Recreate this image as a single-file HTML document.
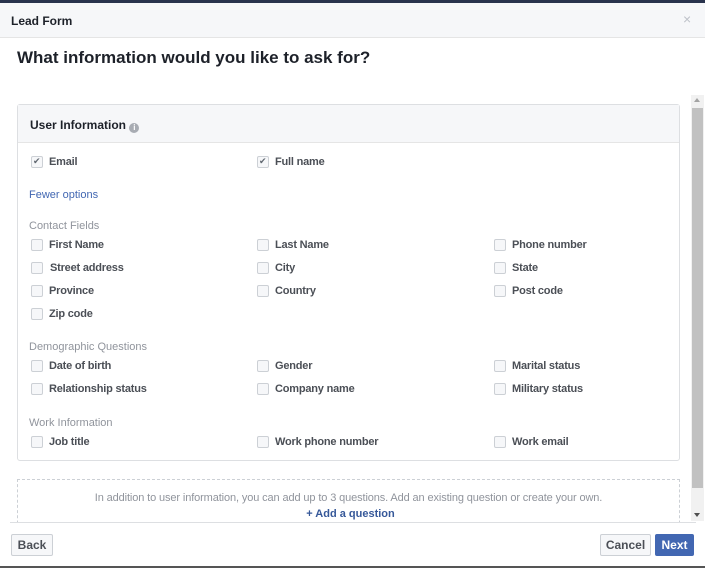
<!DOCTYPE html>
<html><head><style>
*{margin:0;padding:0;box-sizing:border-box}
body{width:705px;height:568px;position:relative;overflow:hidden;background:#fff;font-family:"Liberation Sans",Arial,sans-serif;}
.a{position:absolute}
.cb{position:absolute;width:12px;height:12px;border:1px solid #ccd0d5;border-radius:2px;background:#f6f7f9}
.lb{position:absolute;font-size:11px;font-weight:bold;color:#4b4f56;line-height:13px;letter-spacing:-0.2px;margin-top:1px}
.sec{position:absolute;font-size:11px;color:#90949c;line-height:13px;margin-top:1px}
.ck{position:absolute;left:1px;top:-1px;font-size:9px;color:#606770}
</style></head><body>
<div class="a" style="left:0;top:0;width:705px;height:3px;background:#29334d"></div>
<div class="a" style="left:0;top:3px;width:705px;height:35px;background:#f6f7f9;border-bottom:1px solid #e5e5e5"></div>
<div class="a" style="left:11px;top:14px;font-size:12px;font-weight:bold;color:#1d2129">Lead Form</div>
<div class="a" style="left:683px;top:11px;font-size:14px;color:#bec2c9">×</div>
<div class="a" style="left:17px;top:48px;font-size:17px;font-weight:bold;color:#1d2129">What information would you like to ask for?</div>

<div class="a" style="left:17px;top:104px;width:663px;height:357px;border:1px solid #dddfe2;border-radius:3px"></div>
<div class="a" style="left:18px;top:105px;width:661px;height:38px;background:#f6f7f9;border-bottom:1px solid #e5e5e5"></div>
<div class="a" style="left:30px;top:118px;font-size:12px;font-weight:bold;color:#1d2129">User Information <span style="display:inline-block;width:10px;height:10px;border-radius:50%;background:#a8acb3;vertical-align:-1px;color:#fff;font-size:8px;text-align:center;line-height:10px">i</span></div>

<div class="cb" style="left:31px;top:156px"><span class="ck">✔</span></div><div class="lb" style="left:49px;top:155px">Email</div>
<div class="cb" style="left:257px;top:156px"><span class="ck">✔</span></div><div class="lb" style="left:275px;top:155px">Full name</div>
<div class="a" style="left:29px;top:189px;font-size:11px;color:#4267b2">Fewer options</div>

<div class="sec" style="left:29px;top:219px">Contact Fields</div>
<div class="cb" style="left:31px;top:239px"></div><div class="lb" style="left:49px;top:238px">First Name</div>
<div class="cb" style="left:257px;top:239px"></div><div class="lb" style="left:275px;top:238px">Last Name</div>
<div class="cb" style="left:494px;top:239px"></div><div class="lb" style="left:512px;top:238px">Phone number</div>
<div class="cb" style="left:31px;top:262px"></div><div class="lb" style="left:50px;top:261px">Street address</div>
<div class="cb" style="left:257px;top:262px"></div><div class="lb" style="left:275px;top:261px">City</div>
<div class="cb" style="left:494px;top:262px"></div><div class="lb" style="left:512px;top:261px">State</div>
<div class="cb" style="left:31px;top:285px"></div><div class="lb" style="left:49px;top:284px">Province</div>
<div class="cb" style="left:257px;top:285px"></div><div class="lb" style="left:275px;top:284px">Country</div>
<div class="cb" style="left:494px;top:285px"></div><div class="lb" style="left:512px;top:284px">Post code</div>
<div class="cb" style="left:31px;top:308px"></div><div class="lb" style="left:49px;top:307px">Zip code</div>

<div class="sec" style="left:29px;top:340px">Demographic Questions</div>
<div class="cb" style="left:31px;top:360px"></div><div class="lb" style="left:49px;top:359px">Date of birth</div>
<div class="cb" style="left:257px;top:360px"></div><div class="lb" style="left:275px;top:359px">Gender</div>
<div class="cb" style="left:494px;top:360px"></div><div class="lb" style="left:512px;top:359px">Marital status</div>
<div class="cb" style="left:31px;top:383px"></div><div class="lb" style="left:49px;top:382px">Relationship status</div>
<div class="cb" style="left:257px;top:383px"></div><div class="lb" style="left:275px;top:382px">Company name</div>
<div class="cb" style="left:494px;top:383px"></div><div class="lb" style="left:512px;top:382px">Military status</div>

<div class="sec" style="left:29px;top:416px">Work Information</div>
<div class="cb" style="left:31px;top:436px"></div><div class="lb" style="left:49px;top:435px">Job title</div>
<div class="cb" style="left:257px;top:436px"></div><div class="lb" style="left:275px;top:435px">Work phone number</div>
<div class="cb" style="left:494px;top:436px"></div><div class="lb" style="left:512px;top:435px">Work email</div>

<div class="a" style="left:17px;top:479px;width:663px;height:60px;border:1px dashed #ccd0d5"></div>
<div class="a" style="left:17px;top:492px;width:663px;text-align:center;font-size:11px;color:#90949c;letter-spacing:-0.12px">In addition to user information, you can add up to 3 questions. Add an existing question or create your own.</div>
<div class="a" style="left:19px;top:508px;width:663px;text-align:center;font-size:11px;font-weight:bold;color:#365899">+ Add a question</div>

<div class="a" style="left:691px;top:95px;width:13px;height:426px;background:#f1f1f1"></div>
<div class="a" style="left:692px;top:108px;width:11px;height:380px;background:#c1c1c1"></div>
<div class="a" style="left:694px;top:98px;width:0;height:0;border-left:3px solid transparent;border-right:3px solid transparent;border-bottom:4px solid #a3a3a3"></div>
<div class="a" style="left:694px;top:513px;width:0;height:0;border-left:3px solid transparent;border-right:3px solid transparent;border-top:4px solid #505050"></div>

<div class="a" style="left:0;top:522px;width:705px;height:46px;background:#fff"></div>
<div class="a" style="left:10px;top:522px;width:686px;height:1px;background:#dddfe2"></div>
<div class="a" style="left:11px;top:534px;width:42px;height:22px;border:1px solid #ccd0d5;border-radius:2px;background:#f6f7f9;font-size:12px;font-weight:bold;color:#4b4f56;text-align:center;line-height:20px">Back</div>
<div class="a" style="left:600px;top:534px;width:51px;height:22px;border:1px solid #ccd0d5;border-radius:2px;background:#f6f7f9;font-size:12px;font-weight:bold;color:#4b4f56;text-align:center;line-height:20px">Cancel</div>
<div class="a" style="left:655px;top:534px;width:39px;height:22px;border:1px solid #4267b2;border-radius:2px;background:#4267b2;font-size:12px;font-weight:bold;color:#fff;text-align:center;line-height:20px">Next</div>
<div class="a" style="left:0;top:566px;width:705px;height:2px;background:#555"></div>
</body></html>
